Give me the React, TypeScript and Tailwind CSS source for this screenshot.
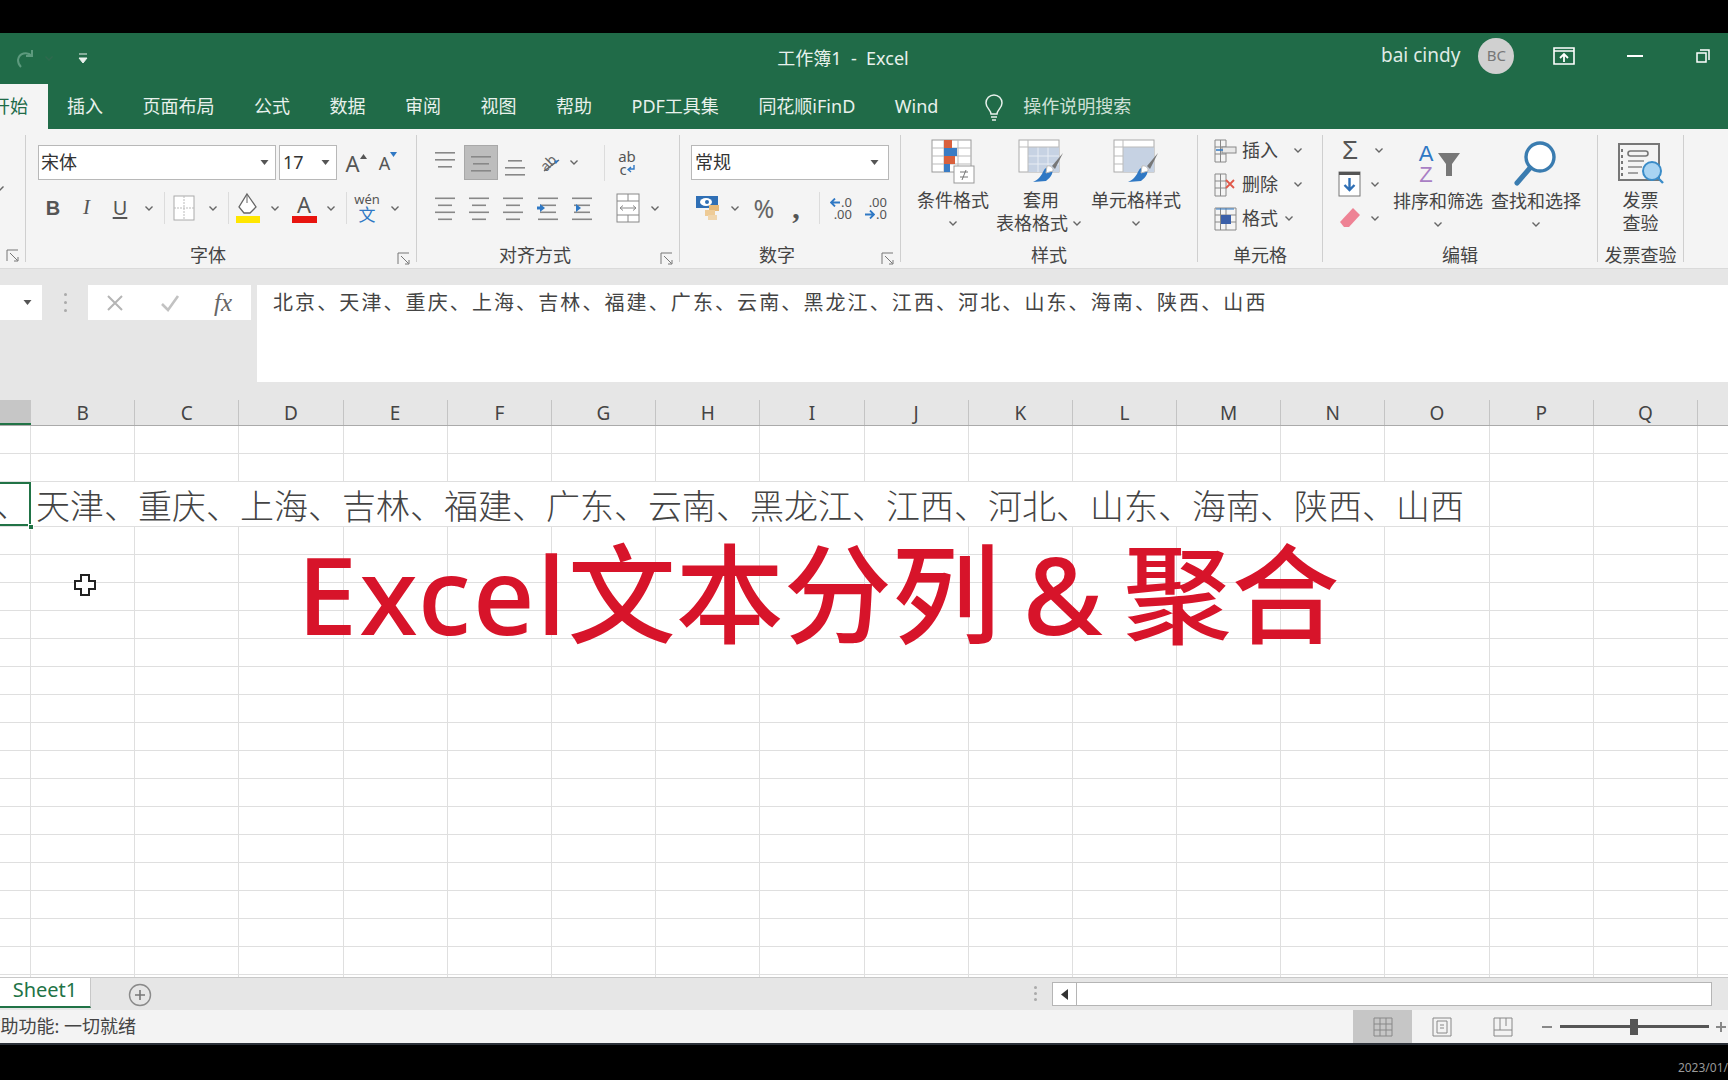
const FONT = "font-['Noto_Sans','Noto_Sans_CJK_SC',sans-serif]";

const Chev = ({ className = '' }: { className?: string }) => (
  <svg width="10" height="7" viewBox="0 0 10 7" className={`shrink-0 ${className}`}>
    <path d="M1.5 1.5 5 5l3.5-3.5" fill="none" stroke="#666" strokeWidth="1.4" />
  </svg>
);

const Caret = () => (
  <svg width="9" height="5" viewBox="0 0 9 5" className="shrink-0">
    <path d="M0.5 0h8L4.5 5z" fill="#555" />
  </svg>
);

const Launcher = () => (
  <svg width="13" height="13" viewBox="0 0 13 13">
    <path d="M1 12V1h11M8 12h4V8M4 4l7.5 7.5" fill="none" stroke="#777" strokeWidth="1" />
  </svg>
);

const GroupSep = () => <div className="my-[6px] w-px shrink-0 bg-[#cfcfcf]" />;
const MiniSep = ({ h = 'h-[36px]' }: { h?: string }) => <div className={`w-px shrink-0 bg-[#dcdcdc] ${h}`} />;

const Group = ({ w, label, launcher, children }: { w: string; label?: string; launcher?: boolean; children?: React.ReactNode }) => (
  <div className={`flex h-full shrink-0 flex-col ${w}`}>
    <div className="h-[113px] pt-[16px]">{children}</div>
    <div className="flex h-[26px] items-center">
      <div className="flex-1 text-center text-[18px] leading-[26px] text-[#444]">{label}</div>
      {launcher && (
        <div className="flex w-[26px] justify-center pt-[6px]">
          <Launcher />
        </div>
      )}
    </div>
  </div>
);

const Lines = ({ widths, blue }: { widths: number[]; blue?: 'l' | 'r' }) => (
  <svg width="26" height="26" viewBox="0 0 26 26" className="shrink-0">
    {widths.map((lw, i) => {
      const y = 13 - ((widths.length - 1) * 7) / 2 + i * 7;
      return <rect key={i} x={(26 - lw) / 2} y={y} width={lw} height="1.6" fill="#888" />;
    })}
    {blue === 'l' && <path d="M8 13 3 9v2.5H0v3h3V17z" fill="#2f78c4" transform="translate(2 0)" />}
    {blue === 'r' && <path d="M6 13 1 9v8z" fill="#2f78c4" transform="translate(6 0)" />}
  </svg>
);

const CondIcon = () => (
  <svg width="44" height="46" viewBox="0 0 44 46">
    <rect x="1" y="1" width="39" height="32" fill="#fff" stroke="#999" />
    <path d="M1 9h39M1 17h39M1 25h39M13 1v32M27 1v32" stroke="#bbb" />
    <rect x="13" y="1" width="8" height="8" fill="#d9603c" />
    <rect x="13" y="9" width="13" height="8" fill="#3a7cc4" />
    <rect x="13" y="17" width="11" height="8" fill="#d9603c" />
    <rect x="13" y="25" width="6" height="8" fill="#3a7cc4" />
    <rect x="23" y="27" width="20" height="17" fill="#fff" stroke="#999" />
    <path d="M29 33h8M29 38h8M31 41l4-10" stroke="#777" fill="none" />
  </svg>
);

const TableIcon = ({ dense }: { dense?: boolean }) => (
  <svg width="46" height="44" viewBox="0 0 46 44">
    <rect x="1" y="1" width="40" height="32" fill="#fff" stroke="#aaa" />
    <rect x="10" y="8" width="31" height="25" fill="#c6d2e3" />
    {dense && <path d="M10 17h31M10 25h31M20 8v25M30 8v25" stroke="#e8edf4" />}
    <path d="M1 8h40M10 1v32" stroke="#bbb" />
    {!dense && <path d="M1 17h9M1 25h9" stroke="#bbb" />}
    <path d="M45 14 34 27l3 3z" fill="#777" />
    <path d="M28 29c4-2 8 1 6 6-1 3-4 5-6 7l-13 1c6-3 7-5 9-8 1-2 2-5 4-6z" fill="#2f78c4" />
    <path d="M29 27c3-1 7 2 6 5l-7 2z" fill="#fff" stroke="#bbb" />
  </svg>
);

const SmallTable = ({ kind }: { kind: 'ins' | 'del' | 'fmt' }) => (
  <svg width="25" height="25" viewBox="0 0 25 25" className="shrink-0">
    <path d="M2 2h11v22H2zM2 9h11M2 16h11M7.5 2v22" fill="none" stroke="#888" />
    {kind === 'ins' && (
      <>
        <rect x="9" y="9" width="14" height="6" fill="#e8e8e8" stroke="#888" />
        <path d="M3 12h7" stroke="#2f78c4" strokeWidth="1.5" />
      </>
    )}
    {kind === 'del' && <path d="M13 8l8 8M21 8l-8 8" stroke="#e0584a" strokeWidth="1.8" />}
    {kind === 'fmt' && (
      <>
        <path d="M13 2h10v22H13M13 9h10M13 16h10" fill="none" stroke="#888" />
        <rect x="8" y="9" width="10" height="9" fill="#3a5fa8" />
        <path d="M3 3h18" stroke="#2f78c4" />
      </>
    )}
  </svg>
);

const DecIcon = ({ top, bottom, arrowTop }: { top: string; bottom: string; arrowTop: boolean }) => (
  <div className="flex w-[30px] flex-col items-end text-[13px] leading-[12px] text-[#555]">
    <div className="flex items-center gap-[1px]">
      {arrowTop && (
        <svg width="10" height="9" viewBox="0 0 10 9">
          <path d="M5 0.5 1 4.5l4 4M1 4.5h9" fill="none" stroke="#2f78c4" strokeWidth="1.8" />
        </svg>
      )}
      {top}
    </div>
    <div className="flex items-center gap-[1px]">
      {!arrowTop && (
        <svg width="10" height="9" viewBox="0 0 10 9">
          <path d="M5 0.5 9 4.5l-4 4M9 4.5H0" fill="none" stroke="#2f78c4" strokeWidth="1.8" />
        </svg>
      )}
      {bottom}
    </div>
  </div>
);

const FontGroup = () => (
  <Group w="w-[390px]" label="字体" launcher>
    <div className="flex items-center pl-[12px]">
      <div className="flex h-[35px] w-[238px] items-center justify-between border border-[#b8b8b8] bg-white pl-[2px] pr-[6px] text-[18px] text-[#333]">
        宋体
        <Caret />
      </div>
      <div className="ml-[3px] flex h-[35px] w-[58px] items-center justify-between border border-[#b8b8b8] bg-white pl-[3px] pr-[6px] text-[18px] text-[#333]">
        17
        <Caret />
      </div>
      <div className="ml-[2px] flex w-[34px] items-start justify-center text-[22px] leading-none text-[#555]">
        A
        <svg width="7" height="5" viewBox="0 0 7 5" className="mt-[2px]">
          <path d="M3.5 0 7 5H0z" fill="#555" />
        </svg>
      </div>
      <div className="flex w-[30px] items-start justify-center text-[18px] leading-none text-[#555]">
        A
        <svg width="7" height="5" viewBox="0 0 7 5" className="-mt-[2px]">
          <path d="M3.5 5 7 0H0z" fill="#2f78c4" />
        </svg>
      </div>
    </div>
    <div className="mt-[10px] flex h-[36px] items-center pl-[10px] text-[#555]">
      <div className="w-[34px] text-center font-['Liberation_Sans'] text-[20px] font-bold">B</div>
      <div className="w-[33px] text-center font-['Liberation_Serif'] text-[21px] italic">I</div>
      <div className="w-[34px] text-center text-[20px] leading-none underline underline-offset-2">U</div>
      <Chev className="ml-[7px]" />
      <MiniSep h="h-[32px] ml-[10px]" />
      <svg width="24" height="26" viewBox="0 0 24 26" className="ml-[8px] shrink-0">
        <rect x="1" y="1" width="20" height="24" fill="#fff" stroke="#aaa" />
        <path d="M11 1v24M1 13h20" stroke="#bbb" strokeDasharray="2 1" />
      </svg>
      <Chev className="ml-[11px]" />
      <MiniSep h="h-[32px] ml-[10px]" />
      <svg width="26" height="32" viewBox="0 0 26 32" className="ml-[6px] shrink-0">
        <path d="M12 2l9 13-6 6H9l-5-6z" fill="#fff" stroke="#666" strokeWidth="1.3" />
        <path d="M12 2v9" stroke="#666" />
        <rect x="1" y="24" width="24" height="7" fill="#ffe600" />
      </svg>
      <Chev className="ml-[9px]" />
      <div className="ml-[11px] flex w-[26px] flex-col items-center text-[22px] leading-[23px] text-[#555]">
        A
        <div className="h-[7px] w-[25px] bg-[#e8140f]" />
      </div>
      <Chev className="ml-[9px]" />
      <MiniSep h="h-[32px] ml-[10px]" />
      <div className="ml-[8px] flex w-[24px] flex-col items-center text-[#555]">
        <div className="text-[13px] leading-[13px]">wén</div>
        <div className="text-[17px] leading-[17px] text-[#2f78c4]">文</div>
      </div>
      <Chev className="ml-[11px]" />
    </div>
  </Group>
);

const AlignGroup = () => (
  <Group w="w-[262px]" label="对齐方式" launcher>
    <div className="flex h-[35px] items-center pl-[15px]">
      <div className="w-[26px] self-start pt-[1px]">
        <Lines widths={[20, 20, 14]} />
      </div>
      <div className="ml-[6px] flex h-[35px] w-[34px] items-center justify-center border border-[#a8a8a8] bg-[#bdbdbd]">
        <Lines widths={[20, 16, 20]} />
      </div>
      <div className="ml-[4px] w-[26px] self-end">
        <Lines widths={[14, 20, 20]} />
      </div>
      <svg width="26" height="26" viewBox="0 0 26 26" className="ml-[9px] shrink-0">
        <text x="3" y="18" fontSize="14" fill="#666" transform="rotate(-45 11 13)">ab</text>
        <path d="M7 21 22 10" stroke="#666" strokeWidth="1.4" />
        <path d="M22 10l-5 1 2 3z" fill="#2f78c4" />
      </svg>
      <Chev className="ml-[6px]" />
      <MiniSep h="h-[36px] ml-[25px]" />
      <div className="ml-[10px] flex w-[24px] flex-col items-center text-[15px] leading-[13px] text-[#555]">
        ab
        <div className="flex items-center">
          c
          <svg width="8" height="8" viewBox="0 0 8 8">
            <path d="M7 0v4H2M4 2 1 4.500l3 2.500" fill="none" stroke="#2f78c4" strokeWidth="1.4" />
          </svg>
        </div>
      </div>
    </div>
    <div className="mt-[10px] flex h-[36px] items-center pl-[15px]">
      <Lines widths={[20, 14, 20, 14]} />
      <div className="ml-[8px]"><Lines widths={[20, 14, 20, 14]} /></div>
      <div className="ml-[8px]"><Lines widths={[20, 14, 20, 14]} /></div>
      <div className="ml-[9px]"><Lines widths={[20, 16, 16, 20]} blue="l" /></div>
      <div className="ml-[8px]"><Lines widths={[20, 16, 16, 20]} blue="r" /></div>
      <svg width="24" height="32" viewBox="0 0 24 32" className="ml-[21px] shrink-0">
        <rect x="1" y="2" width="22" height="28" fill="#fff" stroke="#888" />
        <path d="M1 9h22M1 23h22M12 2v7M12 23v7M4 16h16M4 16l3-2.500M4 16l3 2.500M20 16l-3-2.500M20 16l-3 2.500" fill="none" stroke="#888" />
      </svg>
      <Chev className="ml-[10px]" />
    </div>
  </Group>
);

const NumberGroup = () => (
  <Group w="w-[220px]" label="数字" launcher>
    <div className="pl-[11px]">
      <div className="flex h-[35px] w-[198px] items-center justify-between border border-[#b8b8b8] bg-white pl-[3px] pr-[9px] text-[18px] text-[#333]">
        常规
        <Caret />
      </div>
    </div>
    <div className="mt-[10px] flex h-[36px] items-center pl-[15px]">
      <svg width="26" height="28" viewBox="0 0 26 28" className="shrink-0">
        <rect x="1" y="2" width="22" height="12" fill="#2f6fb5" />
        <ellipse cx="11" cy="8" rx="6" ry="4" fill="#fff" />
        <circle cx="12" cy="8" r="2" fill="#2f6fb5" />
        <rect x="14" y="11" width="10" height="6" fill="#e6b978" />
        <rect x="10" y="16" width="10" height="6" fill="#eecb96" />
        <rect x="13" y="21" width="9" height="5" fill="#f0d5ac" />
      </svg>
      <Chev className="ml-[9px]" />
      <div className="ml-[9px] w-[30px] text-center text-[25px] leading-none text-[#666]">%</div>
      <div className="ml-[7px] w-[20px] text-center font-['Liberation_Serif'] text-[30px] font-bold leading-none text-[#555]">,</div>
      <MiniSep h="h-[32px] ml-[13px]" />
      <div className="ml-[2px]"><DecIcon top=".0" bottom=".00" arrowTop /></div>
      <div className="ml-[5px]"><DecIcon top=".00" bottom=".0" arrowTop={false} /></div>
    </div>
  </Group>
);

const StyleBtn = ({ w, icon, children }: { w: string; icon: React.ReactNode; children: React.ReactNode }) => (
  <div className={`flex flex-col items-center ${w}`}>
    <div className="flex h-[45px] items-start justify-center">{icon}</div>
    <div className="mt-[5px] flex flex-col items-center text-[18px] leading-[23px] text-[#444]">{children}</div>
  </div>
);

const StylesGroup = () => (
  <Group w="w-[296px]" label="样式">
    <div className="-mt-[6px] flex">
      <StyleBtn w="w-[96px] ml-[4px]" icon={<CondIcon />}>
        条件格式
        <Chev className="mt-[8px]" />
      </StyleBtn>
      <StyleBtn w="w-[92px] -ml-[6px]" icon={<TableIcon dense />}>
        套用
        <div className="flex items-center whitespace-nowrap pr-[4px]">
          表格格式
          <Chev className="ml-[4px]" />
        </div>
      </StyleBtn>
      <StyleBtn w="w-[94px] ml-[2px]" icon={<TableIcon />}>
        <span className="whitespace-nowrap">单元格样式</span>
        <Chev className="mt-[8px]" />
      </StyleBtn>
    </div>
  </Group>
);

const CellRow = ({ kind, label, tight }: { kind: 'ins' | 'del' | 'fmt'; label: string; tight?: boolean }) => (
  <div className="flex h-[34px] items-center text-[18px] text-[#444]">
    <SmallTable kind={kind} />
    <span className="ml-[4px] w-[36px]">{label}</span>
    <Chev className={tight ? 'ml-[6px]' : 'ml-[15px]'} />
  </div>
);

const CellsGroup = () => (
  <Group w="w-[124px]" label="单元格">
    <div className="-mt-[12px] pl-[15px]">
      <CellRow kind="ins" label="插入" />
      <CellRow kind="del" label="删除" />
      <CellRow kind="fmt" label="格式" tight />
    </div>
  </Group>
);

const EditGroup = () => (
  <Group w="w-[274px]" label="编辑">
    <div className="-mt-[12px] flex">
      <div className="w-[64px] shrink-0 pl-[15px]">
        <div className="flex h-[34px] items-center">
          <div className="w-[24px] text-center font-['Liberation_Sans'] text-[26px] leading-none text-[#555]">Σ</div>
          <Chev className="ml-[12px]" />
        </div>
        <div className="flex h-[34px] items-center">
          <svg width="24" height="26" viewBox="0 0 24 26" className="shrink-0">
            <rect x="1" y="1" width="21" height="24" fill="#fff" stroke="#777" />
            <rect x="1" y="1" width="21" height="3" fill="#555" />
            <path d="M11.500 7v12M6.500 14l5 5 5-5" fill="none" stroke="#2f6fb5" strokeWidth="2.4" />
          </svg>
          <Chev className="ml-[8px]" />
        </div>
        <div className="flex h-[34px] items-center">
          <svg width="24" height="24" viewBox="0 0 24 24" className="shrink-0">
            <path d="M15 2 22 9 11 21H6L2 16z" fill="#ee8294" />
          </svg>
          <Chev className="ml-[8px]" />
        </div>
      </div>
      <div className="flex w-[102px] shrink-0 flex-col items-center">
        <div className="flex h-[48px] w-[46px] pt-[10px] leading-[20px]">
          <div className="flex w-[22px] flex-col items-center font-['Liberation_Sans'] text-[22px] leading-[21px]">
            <span className="text-[#2f78c4]">A</span>
            <span className="text-[#a97fc4]">Z</span>
          </div>
          <svg width="24" height="26" viewBox="0 0 24 26" className="mt-[9px]">
            <path d="M1 1h22l-8 11v12h-6V12z" fill="#777" />
          </svg>
        </div>
        <div className="mt-[9px] whitespace-nowrap text-[18px] leading-[23px] text-[#444]">排序和筛选</div>
        <Chev className="mt-[8px]" />
      </div>
      <div className="flex w-[94px] shrink-0 flex-col items-center">
        <svg width="44" height="46" viewBox="0 0 44 46" className="mt-[8px] shrink-0">
          <circle cx="26" cy="16" r="14" fill="#fff" stroke="#3a7cb0" strokeWidth="3.4" />
          <path d="M16 27 3 42" stroke="#3a7cb0" strokeWidth="5" strokeLinecap="round" />
        </svg>
        <div className="mt-[3px] whitespace-nowrap text-[18px] leading-[23px] text-[#444]">查找和选择</div>
        <Chev className="mt-[8px]" />
      </div>
    </div>
  </Group>
);

const InvoiceGroup = () => (
  <Group w="w-[85px]" label="发票查验">
    <div className="-mt-[2px] flex flex-col items-center text-[18px] leading-[23px] text-[#444]">
      <svg width="46" height="42" viewBox="0 0 46 42" className="mb-[4px] shrink-0">
        <rect x="1" y="1" width="40" height="36" fill="#f4f4f4" stroke="#777" strokeWidth="2" />
        <path d="M4 6v28" stroke="#777" strokeDasharray="3 3" strokeWidth="2" />
        <rect x="10" y="8" width="20" height="5" rx="2.500" fill="none" stroke="#777" strokeWidth="1.6" />
        <path d="M10 18h16M10 24h14M10 30h10" stroke="#888" strokeWidth="1.6" />
        <circle cx="34" cy="28" r="9" fill="#a9d4f2" stroke="#3a8cc8" strokeWidth="2" />
        <path d="M40 35l5 5" stroke="#3a8cc8" strokeWidth="2.400" />
      </svg>
      <span>发票</span>
      <span>查验</span>
    </div>
  </Group>
);

const tabs = ['页面布局', '公式', '数据', '审阅', '视图', '帮助', 'PDF工具集', '同花顺iFinD', 'Wind'];
const columns = ['B', 'C', 'D', 'E', 'F', 'G', 'H', 'I', 'J', 'K', 'L', 'M', 'N', 'O', 'P', 'Q', 'R'];
const plainRows = Array.from({ length: 17 }, (_, i) => i);
const cells = '天津、重庆、上海、吉林、福建、广东、云南、黑龙江、江西、河北、山东、海南、陕西、山西';

const GridRow = () => (
  <div className="flex h-[28px] shrink-0 border-b border-[#dfdfdf] bg-white">
    <div className="w-[31px] shrink-0 border-r border-[#dfdfdf]" />
    {columns.map((c) => (
      <div key={c} className="w-[104.2px] shrink-0 border-r border-[#dfdfdf]" />
    ))}
  </div>
);

export default function App() {
  return (
    <div className={`relative flex h-[1080px] w-[1728px] flex-col overflow-hidden bg-black ${FONT}`}>
      <div className="h-[33px] shrink-0" />

      {/* title bar */}
      <div className="flex h-[51px] shrink-0 items-center bg-[#206b48] text-white">
        <div className="flex w-[700px] items-center pl-[14px]">
          <svg width="22" height="22" viewBox="0 0 22 22">
            <path d="M18 8C13 3 5 5 4 12c0 3 1 5 3 7M18 2v6h-6" fill="none" stroke="#5d9a7e" strokeWidth="2" />
          </svg>
          <Chev className="ml-[8px] opacity-20" />
          <svg width="10" height="12" viewBox="0 0 10 12" className="ml-[24px]">
            <path d="M1 1h8M1 5h8l-4 5z" fill="#e8f1ec" stroke="#e8f1ec" strokeWidth="1" />
          </svg>
        </div>
        <div className="w-[286px] text-center text-[18px] text-[#e8f1ec]">工作簿1&nbsp;&nbsp;-&nbsp;&nbsp;Excel</div>
        <div className="-mt-[6px] flex flex-1 items-center pl-[395px]">
          <span className="text-[19px] text-[#dfeae4]">bai cindy</span>
          <div className="ml-[18px] flex size-[36px] items-center justify-center rounded-full bg-[#d0d0d0] text-[15px] text-[#777]">BC</div>
          <svg width="22" height="18" viewBox="0 0 22 18" className="ml-[39px]">
            <path d="M1 1h20v16H1zM1 4h20" fill="none" stroke="#fff" strokeWidth="1.600" />
            <path d="M11 15V8M7 11l4-4 4 4" fill="none" stroke="#fff" strokeWidth="1.800" />
          </svg>
          <div className="ml-[52px] h-[2px] w-[16px] bg-white" />
          <svg width="16" height="17" viewBox="0 0 16 17" className="ml-[52px]">
            <path d="M5 3h9v10M2 6h9v9H2z" fill="none" stroke="#fff" strokeWidth="1.500" />
          </svg>
        </div>
      </div>

      {/* tabs */}
      <div className="flex h-[45px] shrink-0 items-center bg-[#206b48] text-[18px] text-[#e8f1ec]">
        <div className="flex h-full w-[48px] items-center justify-end overflow-hidden bg-[#f4f4f4] pr-[20px] text-[#206b48]">
          <span className="shrink-0">开始</span>
        </div>
        <span className="ml-[19px]">插入</span>
        {tabs.map((t) => (
          <span key={t} className="ml-[39.500px] whitespace-nowrap">{t}</span>
        ))}
        <svg width="20" height="28" viewBox="0 0 20 28" className="ml-[46px]">
          <path d="M7 21c0-4-5-6-5-11a8 8 0 0 1 16 0c0 5-5 7-5 11zM7 24h6M8 27h4" fill="none" stroke="#e8f1ec" strokeWidth="1.500" />
        </svg>
        <span className="ml-[19px] text-[#cfe0d7]">操作说明搜索</span>
      </div>

      {/* ribbon */}
      <div className="flex h-[139px] shrink-0 bg-[#f4f4f4]">
        <div className="flex h-full w-[25px] shrink-0 flex-col justify-between pb-[6px] pl-[6px] pt-[56px]">
          <Chev className="-ml-[11px] rotate-0" />
          <Launcher />
        </div>
        <GroupSep />
        <FontGroup />
        <GroupSep />
        <AlignGroup />
        <GroupSep />
        <NumberGroup />
        <GroupSep />
        <StylesGroup />
        <GroupSep />
        <CellsGroup />
        <GroupSep />
        <EditGroup />
        <GroupSep />
        <InvoiceGroup />
        <GroupSep />
      </div>

      {/* formula bar */}
      <div className="flex h-[132px] shrink-0 items-start border-t border-[#dadada] bg-[#e6e6e6] pt-[16px]">
        <div className="flex h-[35px] w-[42px] items-center justify-end bg-white pr-[10px]">
          <Caret />
        </div>
        <div className="flex h-[35px] w-[46px] flex-col items-center justify-center gap-[5px]">
          <div className="size-[3px] rounded-full bg-[#aaa]" />
          <div className="size-[3px] rounded-full bg-[#aaa]" />
          <div className="size-[3px] rounded-full bg-[#aaa]" />
        </div>
        <div className="flex h-[35px] w-[163px] items-center bg-white">
          <svg width="18" height="18" viewBox="0 0 18 18" className="ml-[18px]">
            <path d="M2 2l14 14M16 2 2 16" stroke="#b5b5b5" strokeWidth="2" />
          </svg>
          <svg width="20" height="18" viewBox="0 0 20 18" className="ml-[36px]">
            <path d="M2 10l6 6L18 2" fill="none" stroke="#c2c2c2" strokeWidth="2.600" />
          </svg>
          <span className="ml-[34px] font-['Liberation_Serif'] text-[25px] italic leading-none text-[#666]">fx</span>
        </div>
        <div className="ml-[6px] h-[97px] flex-1 bg-white pl-[16px] pt-[1px] text-[20px] leading-[34px] tracking-[2.1px] text-[#444]">
          北京、{cells}
        </div>
      </div>

      {/* column headers */}
      <div className="flex h-[26px] shrink-0 border-b border-[#aaaaaa] bg-[#e6e6e6] text-[19px] leading-[26px] text-[#444]">
        <div className="w-[31px] shrink-0 border-b-2 border-[#217346] bg-[#c6c6c6]" />
        {columns.map((c) => (
          <div key={c} className="w-[104.2px] shrink-0 border-r border-[#c4c4c4] text-center">{c === 'R' ? '' : c}</div>
        ))}
      </div>

      {/* sheet */}
      <div className="flex h-[551px] shrink-0 flex-col overflow-hidden bg-white">
        <GridRow />
        <GridRow />
        <div className="flex h-[45px] shrink-0 border-b border-[#dfdfdf]">
          <div className="flex h-[44px] w-[31px] shrink-0 items-center justify-end overflow-hidden border-2 border-l-0 border-[#217346] text-[34px] font-light leading-none text-[#444]">
            <span className="shrink-0">、</span>
          </div>
          <div className="w-[1459px] shrink-0 whitespace-nowrap border-r border-[#dfdfdf] pl-[5px] pt-[2px] text-[34px] font-light leading-[44px] text-[#444]">
            {cells}
          </div>
          <div className="w-[104.2px] shrink-0 border-r border-[#dfdfdf]" />
          <div className="w-[104.2px] shrink-0 border-r border-[#dfdfdf]" />
        </div>
        {plainRows.map((r) => (
          <GridRow key={r} />
        ))}
      </div>

      {/* sheet tabs */}
      <div className="flex h-[33px] shrink-0 items-start border-t border-[#c8c8c8] bg-[#e6e6e6]">
        <div className="flex h-[30px] w-[91px] items-center justify-center border-b-2 border-r border-b-[#217346] border-r-[#c8c8c8] bg-white pb-[4px] text-[20px] text-[#217346]">
          Sheet1
        </div>
        <svg width="24" height="24" viewBox="0 0 24 24" className="ml-[37px] mt-[5px]">
          <circle cx="12" cy="12" r="10.500" fill="none" stroke="#8a8a8a" strokeWidth="1.400" />
          <path d="M12 7v10M7 12h10" stroke="#777" strokeWidth="1.600" />
        </svg>
        <div className="ml-[882px] mt-[8px] flex flex-col gap-[3px]">
          <div className="size-[3px] rounded-full bg-[#aaa]" />
          <div className="size-[3px] rounded-full bg-[#aaa]" />
          <div className="size-[3px] rounded-full bg-[#aaa]" />
        </div>
        <div className="ml-[15px] mt-[4px] flex h-[24px] w-[660px] border border-[#b5b5b5] bg-white">
          <div className="flex w-[24px] items-center justify-center border-r border-[#b5b5b5]">
            <svg width="7" height="11" viewBox="0 0 7 11">
              <path d="M7 0v11L0 5.500z" fill="#333" />
            </svg>
          </div>
        </div>
      </div>

      {/* status bar */}
      <div className="flex h-[33px] shrink-0 items-center bg-[#f3f3f3] text-[18px] text-[#444]">
        <div className="flex w-[136px] justify-end overflow-hidden whitespace-nowrap">
          <span className="shrink-0">辅助功能: 一切就绪</span>
        </div>
        <div className="ml-[1217px] flex h-full w-[59px] items-center justify-center bg-[#c6c6c6]">
          <svg width="20" height="20" viewBox="0 0 20 20">
            <path d="M1 1h18v18H1zM1 7h18M1 13h18M7 1v18M13 1v18" fill="none" stroke="#888" />
          </svg>
        </div>
        <svg width="20" height="20" viewBox="0 0 20 20" className="ml-[20px]">
          <path d="M1 1h18v18H1zM5 4h10v12H5zM8 8h4M8 11h4" fill="none" stroke="#888" />
        </svg>
        <svg width="20" height="20" viewBox="0 0 20 20" className="ml-[41px]">
          <path d="M1 1h18v18H1zM1 13h18M7 1v12M13 1v8" fill="none" stroke="#888" />
        </svg>
        <div className="ml-[29px] h-[2px] w-[10px] bg-[#888]" />
        <div className="ml-[8px] flex h-[3px] w-[149px] items-center bg-[#555]">
          <div className="ml-[70px] h-[16px] w-[8px] bg-[#555]" />
        </div>
        <div className="relative ml-[7px] h-[2px] w-[10px] bg-[#888]">
          <div className="absolute left-[4px] top-[-4px] h-[10px] w-[2px] bg-[#888]" />
        </div>
      </div>

      {/* footer */}
      <div className="flex h-[37px] shrink-0 justify-end border-t-2 border-[#2b3038] bg-black pt-[16px] text-[12px] leading-[14px] text-[#999]">
        2023/01/
      </div>

      {/* overlays: handle, cursor, caption */}
      <div className="absolute left-[28px] top-[524px] size-[6px] border border-white bg-[#217346]" />
      <svg width="24" height="24" viewBox="0 0 24 24" className="absolute left-[73px] top-[573px]">
        <path d="M8 2h8v6h6v8h-6v6H8v-6H2V8h6z" fill="#fff" stroke="#222" strokeWidth="2" />
      </svg>
      <div className="absolute left-[297px] top-[519px] whitespace-nowrap text-[108px] font-medium leading-[150px] text-[#d7142a]">
        <span className="tracking-[2px]">Excel</span>文本分列 <span className="-ml-[5px] -mr-[7px]">&amp;</span> 聚合
      </div>
    </div>
  );
}
